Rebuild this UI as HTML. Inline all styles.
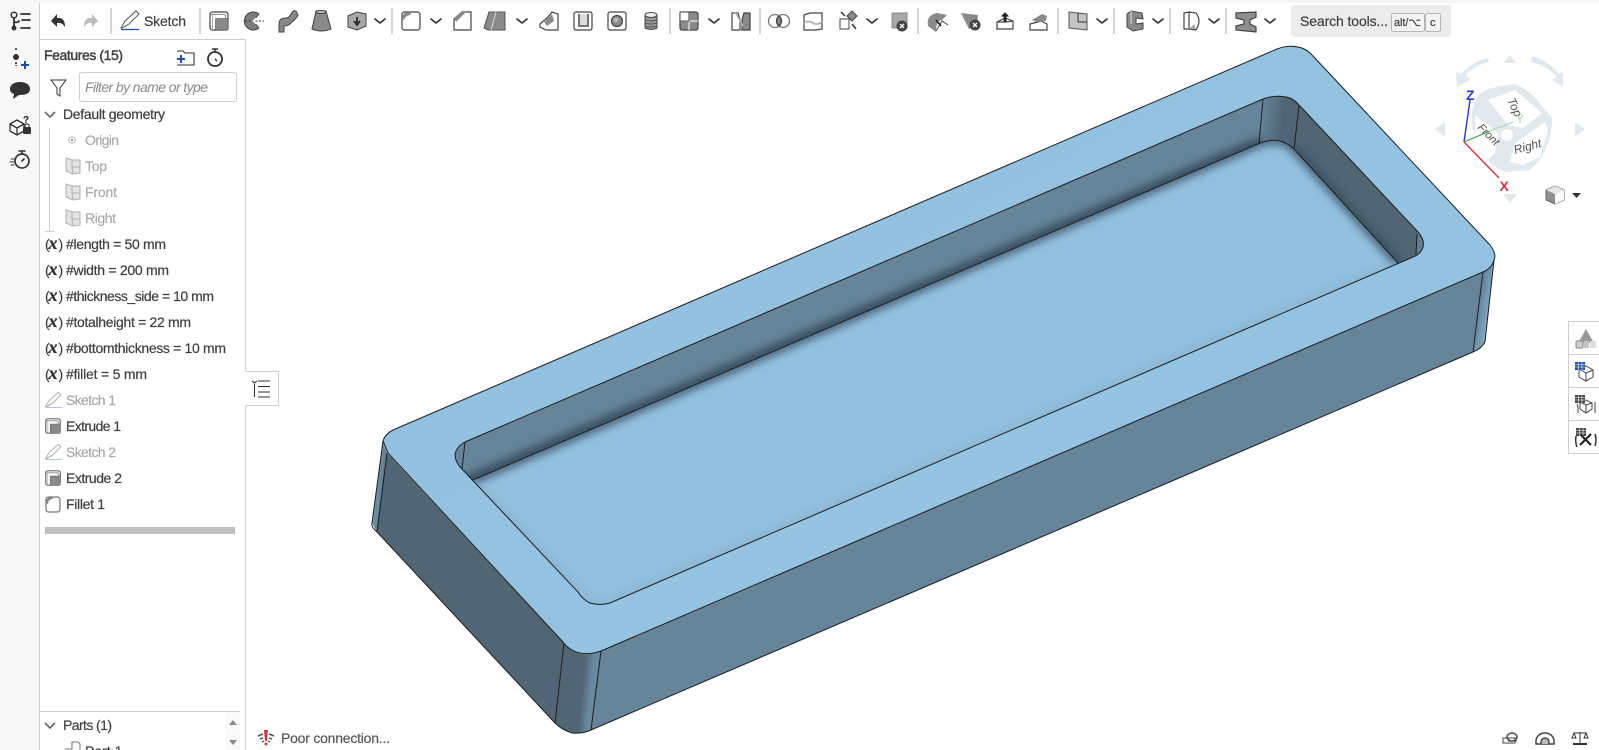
<!DOCTYPE html>
<html><head><meta charset="utf-8"><title>Part Studio</title>
<style>
html,body{margin:0;padding:0;width:1599px;height:750px;overflow:hidden;background:#fff}
svg{display:block}
text{font-family:"Liberation Sans",sans-serif;font-size:14px;fill:#3c3c3c;stroke:#3c3c3c;stroke-width:.18}
text.g{fill:#a9a9a9;stroke:#a9a9a9}
.i{fill:none;stroke:#333;stroke-width:1.3;stroke-linejoin:round;stroke-linecap:round}
.d{stroke:#d4d4d4;stroke-width:2}
.c{fill:none;stroke:#333;stroke-width:1.7;stroke-linecap:round;stroke-linejoin:round}
.m{fill:none;stroke:#1d1d1d;stroke-width:1}
.xv{font:italic bold 18px "Liberation Serif",serif;fill:#333;stroke:#333;stroke-width:.3}
</style></head><body>
<svg width="1599" height="750" viewBox="0 0 1599 750" xmlns="http://www.w3.org/2000/svg">
<defs>
<filter id="b7" x="-20%" y="-20%" width="140%" height="140%"><feGaussianBlur stdDeviation="4"/></filter>
<clipPath id="floorClip"><path d="M473 480L1260 143Q1273 138 1283 142Q1290 145 1294 149L1398 263L610 603Q600 606 590 603Q583 600 578 592Z"/></clipPath>
<clipPath id="openClip"><path d="M465 442L1263 99Q1277 94 1290 98Q1296 101 1300 106L1418 232Q1425 240 1423 247Q1421 254 1413 257L610 603Q600 606 590 603Q583 600 578 592L462 469Q455 462 455 455Q456 447 465 442Z"/></clipPath>
<linearGradient id="top" x1="0" y1="0" x2="1" y2="1"><stop offset="0" stop-color="#90bedd"/><stop offset=".6" stop-color="#95c3e2"/><stop offset="1" stop-color="#90bfde"/></linearGradient>
<linearGradient id="cb" x1="558" y1="685" x2="597" y2="689" gradientUnits="userSpaceOnUse"><stop offset="0" stop-color="#506675"/><stop offset=".62" stop-color="#506675"/><stop offset=".85" stop-color="#688a9f"/><stop offset="1" stop-color="#688a9f"/></linearGradient>
<linearGradient id="cr" x1="1478" y1="312" x2="1490" y2="314" gradientUnits="userSpaceOnUse"><stop offset="0" stop-color="#668599"/><stop offset="1" stop-color="#84aecb"/></linearGradient>
<linearGradient id="cl" x1="374" y1="490" x2="386" y2="491" gradientUnits="userSpaceOnUse"><stop offset="0" stop-color="#7199b2"/><stop offset="1" stop-color="#5a7385"/></linearGradient>
<linearGradient id="cp" x1="1260" x2="1298" y1="120" y2="124" gradientUnits="userSpaceOnUse"><stop offset="0" stop-color="#668599"/><stop offset=".6" stop-color="#4f6575"/><stop offset="1" stop-color="#4f6575"/></linearGradient>
<g id="ext"><rect x="-9" y="-9" width="18" height="18" rx="2.500" fill="#fff" stroke="#444" stroke-width="1.200"/><path d="M-9-6.500H5Q6.500-6.500 6.500-5V9" fill="none" stroke="#888"/><path d="M-6.500 9V-6.500" stroke="#aaa" fill="none"/><rect x="-3.500" y="-2.500" width="12.500" height="11.500" fill="#8a8a8a" stroke="#555" stroke-width=".6"/></g>
<g id="pencil"><path d="M-10 8L-6 1L5-9L8-6L-2 4L-9 8Z" fill="#fff" stroke="#555" stroke-width="1"/></g>
<g id="plane"><path d="M-7-8L-1-6H7V7L0 8L-7 5Z" fill="#e4e4e4" stroke="#b0b0b0" stroke-width="1"/><path d="M-1-6V1H7M-1 1L0 8" fill="none" stroke="#b0b0b0"/></g>
<g id="del"><circle r="5.500" fill="#444"/><path d="M-2-2L2 2M2-2L-2 2" stroke="#fff" stroke-width="1.300"/></g>
</defs>

<rect width="1599" height="3" fill="#f6f7f8"/>
<rect y="3" width="39" height="747" fill="#f8f8f8"/>
<path d="M39.500 3V750M245.500 39V371M245.500 405V750M39.500 39.500H245.500" stroke="#cfcfcf" fill="none"/>

<!-- MODEL -->
<path d="M387 453L564 643L555 723L377 532Z" fill="#506675"/>
<path d="M383 441L387 453L377 532L372 523Z" fill="url(#cl)"/>
<path d="M564 643Q572 652 582 654Q592 655 601 651L591 730Q582 734 572 733Q562 730 555 723Z" fill="url(#cb)"/>
<path d="M601 651L1483 272L1473 352L591 730Z" fill="#668599"/>
<path d="M1483 272Q1492 268 1494 260L1485 342Q1481 349 1473 352Z" fill="url(#cr)"/>
<path d="M393 430L1277 49Q1290 44 1302 48Q1309 51 1313 56L1490 245Q1497 254 1493 262Q1490 269 1482 272L601 651Q590 655 580 653Q570 651 563 642L388 453Q382 446 383 440Q385 434 393 430Z" fill="url(#top)"/>
<g clip-path="url(#openClip)">
<rect x="440" y="80" width="1000" height="540" fill="#668599"/>
<path d="M1294 96L1430 240L1416 262L1398 270L1294 149Z" fill="#506675"/>
<path d="M1259 90H1300V150H1259Z" fill="url(#cp)"/>
<path d="M1417 232L1430 240V262L1416 258Z" fill="#5f7d90"/>
<path d="M466 482L1262 142" stroke="#2f4352" stroke-width="13" fill="none" filter="url(#b7)" opacity=".75"/>
<path d="M1296 150L1400 264" stroke="#2f4352" stroke-width="8" fill="none" filter="url(#b7)" opacity=".6"/>
</g>
<path d="M473 480L1260 143Q1273 138 1283 142Q1290 145 1294 149L1398 263L610 603Q600 606 590 603Q583 600 578 592Z" fill="#92c0df"/>
<g clip-path="url(#floorClip)">
<path d="M473 480L1260 143Q1273 138 1283 142Q1290 145 1294 149L1398 263" fill="none" stroke="#3d5566" stroke-width="9" filter="url(#b7)" opacity=".85"/>
<path d="M473 480L578 592Q590 606 610 603L1398 263" fill="none" stroke="#6b8ba1" stroke-width="8" filter="url(#b7)" opacity=".18"/>
</g>
<g class="m">
<path d="M393 430L1277 49Q1290 44 1302 48Q1309 51 1313 56L1490 245Q1497 254 1494 260L1485 342Q1481 349 1473 352L591 730Q582 734 572 733Q562 730 555 723L377 532Q371 527 372 523L383 441Q385 434 393 430Z"/>
<path d="M388 453L563 642Q570 651 580 653Q590 655 601 651L1483 272Q1492 268 1494 260"/>
<path d="M383 441L388 453M387 453L377 532M564 643L555 723M601 651L591 730M1483 272L1473 352"/>
<path d="M465 442L1263 99Q1277 94 1290 98Q1296 101 1300 106L1418 232Q1425 240 1423 247Q1421 254 1413 257L610 603Q600 606 590 603Q583 600 578 592L462 469Q455 462 455 455Q456 447 465 442Z"/>
<path d="M473 480L1260 143Q1273 138 1283 142Q1290 145 1294 149L1398 263"/>
<path d="M1263 99L1259 143M1299 106L1294 149M1417 234L1416 255M465 442L462 469"/>
</g>

<!-- left rail icons -->
<g transform="translate(20,21)" class="i"><circle cx="-6" cy="-6" r="2.800" stroke-width="1.500"/><circle cx="-6" cy="7" r="1.800" fill="#333"/><path d="M-6-3V5M-6 1Q-2 2-1 0M1-7H10M2-1H10M1 7H10" stroke-width="1.800"/></g>
<g transform="translate(20,57)"><circle cx="-4" cy="0" r="3" fill="#333"/><path d="M-4-9V-6M-4 5V9" stroke="#333" stroke-width="1.600" stroke-dasharray="2 1"/><path d="M5 4V12M1 8H9" stroke="#1a4fa8" stroke-width="2"/></g>
<path d="M10 89C10 84 15 82 20 82S30 84 30 89S25 95 19 95L13 99L14 94C11 93 10 91 10 89Z" fill="#333"/>
<g transform="translate(18,126)" class="i"><path d="M-8-2L-1-6L6-2V5L-1 9L-8 5ZM-8-2L-1 2L6-2M-1 2V9"/></g>
<text x="23" y="123" style="font-size:10px;font-weight:bold;fill:#333">?</text>
<rect x="23" y="127" width="8" height="7" rx="1" fill="#333"/><path d="M25 127V125Q27 123 29 125V127" stroke="#333" fill="none"/>
<g transform="translate(22,161)" class="i"><circle r="7" stroke-width="1.700"/><path d="M-3-10H3M0-10V-7M2-2L0 0" stroke-width="1.600"/><path d="M-11-2H-8M-12 1H-8M-11 4H-8" stroke-width="1"/></g>

<!-- top bar -->
<path d="M51 21L57 14V18Q65 17 65 27Q62 22 57 23V27Z" fill="#333"/>
<path d="M98 21L92 14V18Q84 17 84 27Q87 22 92 23V27Z" fill="#bdbdbd"/>
<path class="d" d="M111 8V34M200 8V34M392 8V34M670 8V34M760 8V34M918 8V34M1058 8V34M1114 8V34M1170 8V34M1226 8V34"/>
<use href="#pencil" transform="translate(131,20)"/><path d="M121 29.500H139" stroke="#1a4fa8" stroke-width="1.200"/>
<text x="144" y="26" textLength="42">Sketch</text>

<use href="#ext" transform="translate(219,21)"/>
<g transform="translate(253,21)"><path d="M6-7A9 9 0 1 0 6 7L0 0Z" fill="#7d7d7d" stroke="#444"/><path d="M-8 0H11" stroke="#333" stroke-dasharray="2 1.500" stroke-width="1"/><path d="M3-3L0 0L3 3" fill="none" stroke="#fff"/></g>
<path d="M279 32V24Q279 18 286 18Q289 18 291 14Q293 10 296 11L298 15Q296 19 292 22Q289 26 284 26V32Z" fill="#8a8a8a" stroke="#444"/>
<path d="M316 11H326L331 29Q321 33 312 29Z" fill="#8a8a8a" stroke="#444"/><ellipse cx="321" cy="12" rx="5" ry="1.500" fill="#bbb" stroke="#444"/>
<g transform="translate(357,21)"><path d="M-9-5L0-9L9-7V5L0 9L-9 6Z" fill="#a8a8a8" stroke="#444"/><path d="M0-4V2M-3 0L0 4L3 0" stroke="#222" stroke-width="1.700" fill="none"/></g>
<path class="c" d="M375 19L380 23L385 19"/>

<g transform="translate(410,21)"><rect x="-8" y="-9" width="18" height="18" rx="2.500" fill="#fff" stroke="#444" stroke-width="1.200"/><path d="M-8-2Q-8-8-2-9H2L0-6Q-5-5-6-1Z" fill="#8a8a8a"/></g>
<path class="c" d="M431 19L436 23L441 19"/>
<g transform="translate(463,21)"><path d="M-9-2L-1-9H8V9H-9Z" fill="#fff" stroke="#444" stroke-width="1.200"/><path d="M-9-3L-2-9H3L-7 1Z" fill="#8a8a8a"/></g>
<path d="M489 12H505V30H488L484 28Z" fill="#8a8a8a" stroke="#555"/><path d="M496 12L491 30" stroke="#ddd"/>
<path class="c" d="M517 19L522 23L527 19"/>
<g transform="translate(549,21)"><path d="M-9 3L-1-4L3-9L9-7V9H-3L-9 6Z" fill="#fff" stroke="#444" stroke-width="1.200"/><path d="M-5 1L3-7L5 0L-2 5Z" fill="#8a8a8a"/></g>
<g transform="translate(583,21)"><rect x="-9" y="-9" width="18" height="18" rx="2" fill="#fff" stroke="#444" stroke-width="1.200"/><path d="M-4-7V5H5V-7" fill="#ddd" stroke="#666" stroke-width="1.800"/></g>
<g transform="translate(617,21)"><rect x="-9" y="-9" width="18" height="18" rx="2" fill="#fff" stroke="#444" stroke-width="1.200"/><circle r="5.500" fill="#8a8a8a" stroke="#444" stroke-width="1.200"/><circle cx="-1" cy="-1" r="2.500" fill="#b5b5b5"/></g>
<g transform="translate(651,21)"><path d="M-6-6V7Q0 10 6 7V-6" fill="#999" stroke="#444"/><ellipse cy="-6" rx="6" ry="2.500" fill="#eee" stroke="#444"/><path d="M-6-1Q0 1 6-1M-6 2Q0 4 6 2M-6 5Q0 7 6 5" stroke="#555" fill="none"/></g>

<g transform="translate(689,21)"><rect x="-9" y="-9" width="18" height="18" rx="2" fill="#8a8a8a" stroke="#444" stroke-width="1.200"/><path d="M0-9V9M-9 0H9" stroke="#ddd" stroke-width="1.500"/><rect x="-9" y="-9" width="9" height="9" fill="#fff" stroke="#444"/></g>
<path class="c" d="M709 19L714 23L719 19"/>
<g transform="translate(741,21)"><path d="M-9-8H-3L-1-1V9H-9Z" fill="#fff" stroke="#444" stroke-width="1.200"/><path d="M1 9V-1L3-8H9V9Z" fill="#8a8a8a" stroke="#444" stroke-width="1.200"/><path d="M-6-9L2 5" stroke="#bbb" stroke-width="1.500"/></g>

<g transform="translate(779,21)" fill="none" stroke="#777" stroke-width="1.300"><circle cx="-4" r="6.500"/><circle cx="4" r="6.500"/><path d="M0-5A6.500 6.500 0 0 1 0 5A6.500 6.500 0 0 1 0-5Z" fill="#8a8a8a" stroke="#444"/></g>
<g transform="translate(813,21)"><path d="M-9-6L-3-8H9V8L3 9H-9Z" fill="#fff" stroke="#444" stroke-width="1.200"/><path d="M-10 2Q-4-1 0 2T10 0" stroke="#aaa" fill="none" stroke-width="1.500"/></g>
<g transform="translate(849,21)"><rect x="-9" y="-2" width="9" height="10" fill="#fff" stroke="#444"/><path d="M3-10L8-5L3 0L-2-5Z" fill="#8a8a8a" stroke="#444"/><path d="M-8-9L-4-5M3 3L7 8" stroke="#333" stroke-width="1.500"/></g>
<path class="c" d="M867 19L872 23L877 19"/>
<g transform="translate(900,20)"><rect x="-8" y="-7" width="15" height="15" fill="#a8a8a8" stroke="#8a8a8a"/></g><use href="#del" transform="translate(902,26)"/>

<path d="M928 26Q926 15 937 13L947 15L942 20Q936 20 936 32Z" fill="#8a8a8a"/><path d="M936 31L942 21L948 25" fill="#fff" stroke="#444"/><path d="M936 20L941 26" stroke="#222" stroke-width="1.700"/>
<path d="M961 13L978 15L977 26L969 29Z" fill="#8a8a8a"/><use href="#del" transform="translate(975,25)"/>
<g transform="translate(1005,22)"><path d="M-8 0L0-4L8-1V7H-8ZM-8 0H1L8-1" fill="#fff" stroke="#444" stroke-width="1.200"/><path d="M0-9L-3-6H-1V-1H1V-6H3Z" fill="#222" stroke="#222"/></g>
<g transform="translate(1039,22)"><path d="M-9 2L2-1L8 2V8H-9Z" fill="#fff" stroke="#444" stroke-width="1.200"/><path d="M-7-2L3-8L8-6L7-1L-3 0Z" fill="#8a8a8a"/></g>

<g transform="translate(1078,21)"><path d="M-9-9L9-7V9L-9 7Z" fill="#c4c4c4" stroke="#555"/><path d="M0-8V1H9" stroke="#333" fill="none"/></g>
<path class="c" d="M1097 19L1102 23L1107 19"/>
<g transform="translate(1135,21)"><path d="M-8-7L-4-10L7-8L8-2L1-3V3L8 2V8L-2 10L-8 6Z" fill="#8a8a8a" stroke="#444"/><path d="M-4-10V3" stroke="#ddd"/></g>
<path class="c" d="M1153 19L1158 23L1163 19"/>
<g transform="translate(1191,21)"><path d="M-7-8L-2-9V8H-7ZM-2-9L5-8Q8-4 8 0T5 9L-2 8" fill="#fff" stroke="#444" stroke-width="1.200"/><path d="M-2 8L3 3L5 8" fill="#aaa"/></g>
<path class="c" d="M1209 19L1214 23L1219 19"/>
<path d="M1236 13L1256 12V17L1250 20V24L1256 27V32L1236 30V26L1244 24V20L1236 18Z" fill="#8f8f8f" stroke="#444" stroke-width="1.200"/>
<path class="c" d="M1265 19L1270 23L1275 19"/>
<rect x="1291" y="5" width="160" height="32" rx="4" fill="#ececec"/>
<text x="1300" y="26" textLength="88">Search tools...</text>
<rect x="1391.500" y="13.500" width="33" height="18" rx="2" fill="#f4f4f4" stroke="#b5b5b5"/><rect x="1425.500" y="13.500" width="15" height="18" rx="2" fill="#f4f4f4" stroke="#b5b5b5"/>
<text x="1394" y="26" style="font-size:11px" textLength="27">alt/⌥</text><text x="1430" y="26" style="font-size:11px">c</text>

<!-- panel -->
<text x="44" y="60" textLength="79" style="stroke-width:.4">Features (15)</text>
<g transform="translate(185,58)"><path d="M-8-7H-2L0-5H9V7H-8" fill="none" stroke="#333" stroke-width="1.100"/><path d="M-4-3V5M-8 1H0" stroke="#1a4fa8" stroke-width="2"/></g>
<g transform="translate(215,58)" fill="none" stroke="#333"><circle cy="1" r="7" stroke-width="1.800"/><path d="M-3-9H3M0-9V-6M0 1L2 3" stroke-width="1.500"/></g>
<path d="M51 80H66L60 88V96L57 94V88Z" fill="none" stroke="#333"/>
<rect x="79.500" y="72.500" width="157" height="29" rx="2.500" fill="#fff" stroke="#cfcfcf"/>
<text x="85" y="92" textLength="123" style="font-style:italic;fill:#8a8a8a;stroke:none">Filter by name or type</text>

<path d="M45 112L50 117L55 112" fill="none" stroke="#666" stroke-width="1.600"/>
<text x="63" y="119" textLength="102">Default geometry</text>
<path d="M49.500 128V231M45 231.500H54" stroke="#cfcfcf" fill="none"/>
<circle cx="72" cy="140" r="3.300" fill="none" stroke="#b5b5b5"/><circle cx="72" cy="140" r="1.200" fill="#999"/>
<text x="85" y="145" class="g" textLength="34">Origin</text>
<use href="#plane" transform="translate(73,166)"/><text x="85" y="171" class="g" textLength="22">Top</text>
<use href="#plane" transform="translate(73,192)"/><text x="85" y="197" class="g" textLength="32">Front</text>
<use href="#plane" transform="translate(73,218)"/><text x="85" y="223" class="g" textLength="31">Right</text>

<text x="45" y="249">(</text><text x="48.500" y="249" class="xv">x</text><text x="58.500" y="249">)</text><text x="66" y="249" textLength="100">#length = 50 mm</text>
<text x="45" y="275">(</text><text x="48.500" y="275" class="xv">x</text><text x="58.500" y="275">)</text><text x="66" y="275" textLength="103">#width = 200 mm</text>
<text x="45" y="301">(</text><text x="48.500" y="301" class="xv">x</text><text x="58.500" y="301">)</text><text x="66" y="301" textLength="148">#thickness_side = 10 mm</text>
<text x="45" y="327">(</text><text x="48.500" y="327" class="xv">x</text><text x="58.500" y="327">)</text><text x="66" y="327" textLength="125">#totalheight = 22 mm</text>
<text x="45" y="353">(</text><text x="48.500" y="353" class="xv">x</text><text x="58.500" y="353">)</text><text x="66" y="353" textLength="160">#bottomthickness = 10 mm</text>
<text x="45" y="379">(</text><text x="48.500" y="379" class="xv">x</text><text x="58.500" y="379">)</text><text x="66" y="379" textLength="81">#fillet = 5 mm</text>

<g opacity=".55"><use href="#pencil" transform="translate(54,400) scale(.85)"/><path d="M46 407.500H62" stroke="#6f9bd8"/></g>
<text x="66" y="405" class="g" textLength="50">Sketch 1</text>
<use href="#ext" transform="translate(53,426) scale(.8)"/><text x="66" y="431" textLength="55">Extrude 1</text>
<g opacity=".55"><use href="#pencil" transform="translate(54,452) scale(.85)"/><path d="M46 459.500H62" stroke="#6f9bd8"/></g>
<text x="66" y="457" class="g" textLength="50">Sketch 2</text>
<use href="#ext" transform="translate(53,478) scale(.8)"/><text x="66" y="483" textLength="56">Extrude 2</text>
<g transform="translate(53,504)"><rect x="-7" y="-7" width="14" height="15" rx="2.500" fill="#fff" stroke="#555"/><path d="M-7-1Q-7-7-1-7H2L-1-5Q-5-4-5 0Z" fill="#8a8a8a"/></g>
<text x="66" y="509" textLength="39">Fillet 1</text>
<rect x="45" y="527" width="190" height="7" fill="#c0c0c0"/>

<path d="M40 711.500H240" stroke="#cfcfcf"/>
<rect x="225" y="712" width="15" height="38" fill="#fafafa"/>
<path d="M229 725L233 720L237 725Z" fill="#8a8a8a"/><path d="M229 740L233 745L237 740Z" fill="#8a8a8a"/>
<path d="M45 723L50 728L55 723" fill="none" stroke="#666" stroke-width="1.600"/>
<text x="63" y="730" textLength="49">Parts (1)</text>
<path d="M65 749H72M72 749V742H78L80 744V750" stroke="#777" fill="none"/>
<text x="85" y="756">Part 1</text>

<rect x="245" y="371" width="34" height="34" fill="#fff"/>
<path d="M245.500 371.500H278.500V405.500H245.500" stroke="#cfcfcf" fill="none"/>
<path d="M252 381L254.500 383L257 381M254.500 384V397M258 381H270M258 386.500H270M258 392H270M258 397H270" stroke="#333" fill="none" stroke-width="1.100"/>

<!-- status -->
<g transform="translate(266,738)" fill="none" stroke="#555" stroke-width="1.500"><path d="M-8-2L-3-4M-6 1L-3 0M-4 4L-2 3M8-2L3-4M6 1L3 0M4 4L2 3"/></g>
<path d="M264 730H268L267 741H265Z" fill="#d33b44"/><circle cx="266" cy="744" r="1.500" fill="#d33b44"/>
<text x="281" y="743" textLength="109" style="fill:#555;stroke:#555">Poor connection...</text>

<!-- view cube -->
<g fill="#e1e9ef">
<path d="M1510 55L1516 63H1504Z"/><path d="M1435 129L1445 122V137Z"/><path d="M1585 129L1575 122V137Z"/><path d="M1510 203L1517 194H1503Z"/>
<path d="M1489 62Q1473 66 1465 76L1471 79L1457 87L1456 72L1461 74Q1472 62 1488 58Z"/>
<path d="M1531 62Q1549 67 1557 77L1552 80L1563 87L1563 72L1559 74Q1549 61 1532 56Z"/>
<path d="M1515 84Q1480 88 1477 98Q1470 110 1472 125L1477 145Q1490 168 1506 172L1530 170Q1552 150 1552 118L1541 105Q1530 90 1515 84Z"/>
</g>
<g fill="#fff">
<path d="M1488 100L1515 90L1542 113L1523 128L1508 125Z"/>
<path d="M1475 115L1498 133L1495 153L1488 160L1475 143Z"/>
<path d="M1510 162L1515 143L1545 122L1548 130L1540 157L1523 165Z"/>
<circle cx="1507" cy="135" r="6"/>
</g>
<text transform="translate(1507,100) rotate(65)" style="font-size:12px;font-style:italic;fill:#555;stroke:none">Top</text>
<text transform="translate(1477,128) rotate(45)" style="font-size:11px;font-style:italic;fill:#555;stroke:none">Front</text>
<text transform="translate(1515,154) rotate(-15)" style="font-size:12px;font-style:italic;fill:#555;stroke:none">Right</text>
<path d="M1464 142L1470 100" stroke="#2b38d6" stroke-width="1.400"/>
<path d="M1464 142L1499 178" stroke="#d8343d" stroke-width="1.400"/>
<path d="M1464 142L1490 131" stroke="#35a83c" stroke-width="1.200"/><path d="M1490 131L1513 122" stroke="#a5dba8" stroke-width="1.200"/>
<text x="1466" y="100" style="font-size:14px;font-weight:bold;fill:#2b38d6;stroke:none">Z</text>
<text x="1499.500" y="191" style="font-size:14px;font-weight:bold;fill:#d8343d;stroke:none">X</text>
<text x="1516" y="123" style="font-size:12px;fill:#a5dba8;stroke:none">Y</text>
<g transform="translate(1555,195)"><path d="M-9-5L0-9L9-5V5L0 9L-9 5Z" fill="#8f8f8f" stroke="#666"/><path d="M-9-5L0-1L9-5L0-9Z" fill="#e6e6e6"/><path d="M0-1L9-5V5L0 9Z" fill="#fafafa"/></g>
<path d="M1572 193H1581L1576.500 198Z" fill="#333"/>

<!-- right panel -->
<path d="M1599 321.500H1568.500V453.500H1599M1568 354.500H1599M1568 387.500H1599M1568 420.500H1599" stroke="#cfcfcf" fill="none"/>
<g transform="translate(1586,338)"><path d="M-8 5L0-9L8 5Z" fill="#9a9a9a"/><rect x="-10" y="3" width="7" height="7" rx="1" fill="#ccc" stroke="#888"/><rect x="-2" y="3" width="5" height="7" fill="#c4c4c4"/><rect x="4" y="3" width="6" height="7" fill="#ddd"/></g>
<g transform="translate(1586,372)"><path d="M-7-3L0-6L7-2V5L0 9L-7 5ZM-7-3L0 1L7-2M0 1V9" fill="#fff" stroke="#444"/><rect x="-11" y="-10" width="10" height="8" fill="#1a4fa8"/><path d="M-11-7.500H-1M-11-5H-1M-7.500-10V-2M-4-10V-2" stroke="#fff" stroke-width=".6"/></g>
<g transform="translate(1586,405)"><path d="M-6-3L0-5L6-2V4L0 8L-6 4ZM-6-3L0 0L6-2M0 0V8" fill="#fff" stroke="#444"/><path d="M-9-1Q-8 1-8 3V8M9-3V8" fill="none" stroke="#444"/><rect x="-11" y="-10" width="10" height="8" fill="#444"/><path d="M-11-7.500H-1M-11-5H-1M-7.500-10V-2M-4-10V-2" stroke="#fff" stroke-width=".6"/></g>
<g transform="translate(1586,438)"><rect x="-10" y="-10" width="10" height="8" fill="#444"/><path d="M-10-7.500H0M-10-5H0M-6.500-10V-2M-3-10V-2" stroke="#fff" stroke-width=".6"/><path d="M-10-2Q-11 4-9 9M9-4Q11 2 9 8" fill="none" stroke="#333" stroke-width="1.500"/><path d="M-6 7L5-4M-5-3L5 7" stroke="#222" stroke-width="2.200"/></g>

<!-- bottom right -->
<g transform="translate(1510,738)" fill="none" stroke="#444"><rect x="-7" y="0" width="12" height="5" fill="#fff"/><ellipse cx="2" cy="-1" rx="5" ry="4" stroke-width="1.400"/><path d="M-2 3H7"/></g>
<g transform="translate(1545,739)" fill="none" stroke="#444" stroke-width="1.500"><path d="M-9 5V2A9 8 0 0 1 9 2V5Z"/><path d="M-4 5V3A4 4 0 0 1 4 3V5" fill="#bbb"/></g>
<g transform="translate(1580,738)" fill="none" stroke="#333"><path d="M0-6V5M-6-5H6M-6-5L-8 0H-4ZM6-5L4 0H8Z"/><path d="M-7 6H7" stroke-width="2"/></g>
</svg>
</body></html>
